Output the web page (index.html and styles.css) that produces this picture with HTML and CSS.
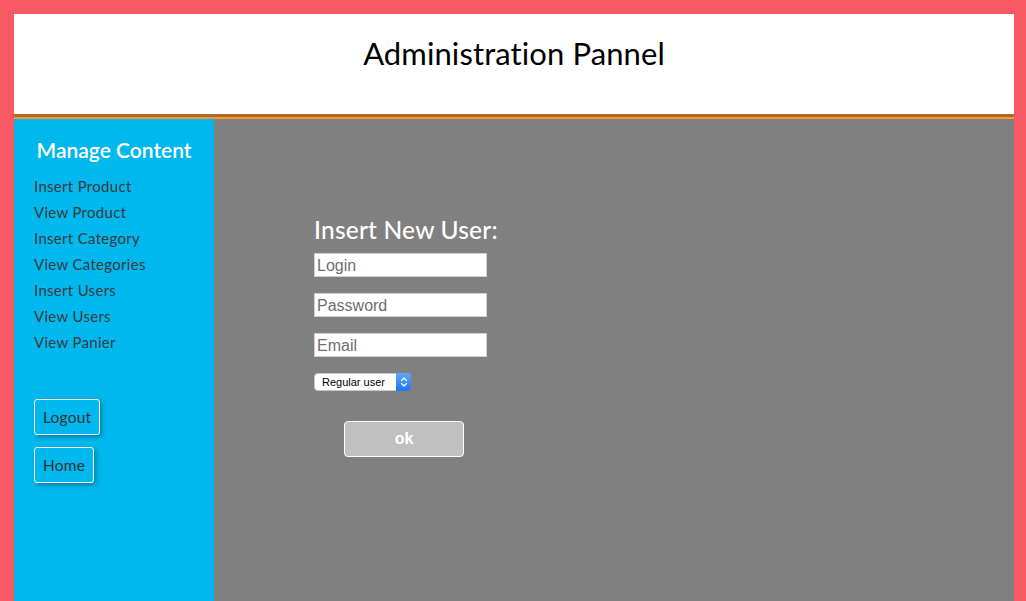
FILE: index.html
```html
<!DOCTYPE html>
<html>
<head>
<meta charset="utf-8">
<title>Administration Pannel</title>
<link rel="stylesheet" href="styles.css">
</head>
<body>
<div class="page">
  <header class="header">
    <h1 class="title">Administration Pannel</h1>
  </header>
  <div class="main">
    <aside class="sidebar">
      <h2 class="side-title">Manage Content</h2>
      <ul class="nav">
        <li><a href="#">Insert Product</a></li>
        <li><a href="#">View Product</a></li>
        <li><a href="#">Insert Category</a></li>
        <li><a href="#">View Categories</a></li>
        <li><a href="#">Insert Users</a></li>
        <li><a href="#">View Users</a></li>
        <li><a href="#">View Panier</a></li>
      </ul>
      <div class="side-buttons">
        <button class="side-btn">Logout</button>
        <button class="side-btn">Home</button>
      </div>
    </aside>
    <section class="content">
      <form class="user-form">
        <h3 class="form-title">Insert New User:</h3>
        <input class="field" type="text" placeholder="Login">
        <input class="field" type="password" placeholder="Password">
        <input class="field" type="text" placeholder="Email">
        <div class="select-wrap">
          <select class="select">
            <option>Regular user</option>
            <option>Admin</option>
          </select>
          <span class="select-arrow">
            <svg width="8" height="12" viewBox="0 0 8 12"><path d="M1.5 4.5 L4 2 L6.5 4.5 M1.5 7.5 L4 10 L6.5 7.5" fill="none" stroke="#fff" stroke-width="1.3" stroke-linecap="round" stroke-linejoin="round"/></svg>
          </span>
        </div>
        <button class="ok-btn" type="button">ok</button>
      </form>
    </section>
  </div>
</div>
</body>
</html>
```
FILE: styles.css
```css
html, body {
  margin: 0;
  padding: 0;
}
body {
  background: #f75a63;
  font-family: "Lato", "Open Sans", sans-serif;
  height: 601px;
  overflow: hidden;
}
.page {
  margin: 14px 12px 0 14px;
  display: flex;
  flex-direction: column;
  height: 587px;
}
.header {
  background: #fff;
  height: 100px;
  border-bottom: 3px solid #b0692a;
  box-shadow: 0 2px 0 #f89a2f;
  position: relative;
  z-index: 1;
  display: flex;
  justify-content: center;
}
.title {
  margin: 0;
  padding-top: 20px;
  font-weight: 400;
  font-size: 31px;
  color: #000;
  letter-spacing: 0.1px;
}
.main {
  flex: 1;
  display: flex;
}
.sidebar {
  width: 200px;
  background: #00b7ee;
  padding-top: 20px;
}
.side-title {
  margin: 0 0 11px;
  text-align: center;
  color: #fff;
  font-size: 21px;
  font-weight: 600;
}
.nav {
  list-style: none;
  margin: 0;
  padding: 0 0 0 20px;
}
.nav li {
  height: 26px;
  line-height: 26px;
}
.nav a {
  color: #3a3a3a;
  text-decoration: none;
  font-size: 15px;
  letter-spacing: 0.3px;
}
.side-buttons {
  padding: 44px 0 0 20px;
  display: flex;
  flex-direction: column;
  align-items: flex-start;
  gap: 12px;
}
.side-btn {
  font-family: inherit;
  font-size: 15.5px;
  color: #333;
  background: transparent;
  border: 1px solid #fff;
  border-radius: 3px;
  height: 36px;
  padding: 0 8px;
  letter-spacing: 0.2px;
  box-shadow: 2px 2px 4px rgba(0, 0, 0, 0.3);
}
.content {
  flex: 1;
  background: #808080;
  padding: 98px 0 0 100px;
}
.user-form {
  display: flex;
  flex-direction: column;
  align-items: flex-start;
}
.form-title {
  margin: 0 0 8px;
  color: #fff;
  font-size: 24.5px;
  font-weight: 500;
  line-height: 30px;
  letter-spacing: 0.2px;
}
.field {
  box-sizing: border-box;
  width: 173px;
  height: 24px;
  margin: 0 0 16px;
  border: 1px solid #cfcfcf;
  padding: 1px 2px 0;
  font-family: "Liberation Sans", Arial, sans-serif;
  font-size: 16px;
  background: #fff;
  outline: none;
}
.field::placeholder {
  color: #6e6e6e;
}
.select-wrap {
  position: relative;
  width: 97px;
  height: 18px;
}
.select {
  display: block;
  appearance: none;
  -webkit-appearance: none;
  box-sizing: border-box;
  width: 97px;
  height: 18px;
  margin: 0;
  border: 1px solid #c8c8c8;
  border-radius: 4px;
  background: #fff;
  font-family: "Liberation Sans", Arial, sans-serif;
  font-size: 11px;
  padding: 0 0 0 7px;
  color: #000;
}
.select-arrow {
  position: absolute;
  right: 0;
  top: 0;
  width: 15px;
  height: 18px;
  background: linear-gradient(#5fa8f7, #1f74f0);
  border-radius: 0 4px 4px 0;
  display: flex;
  align-items: center;
  justify-content: center;
}
.ok-btn {
  margin: 30px 0 0 30px;
  width: 120px;
  height: 36px;
  background: #c0c0c0;
  border: 1px solid #fff;
  border-radius: 4px;
  color: #fff;
  font-family: "Liberation Sans", Arial, sans-serif;
  font-weight: 700;
  font-size: 16px;
}
```
